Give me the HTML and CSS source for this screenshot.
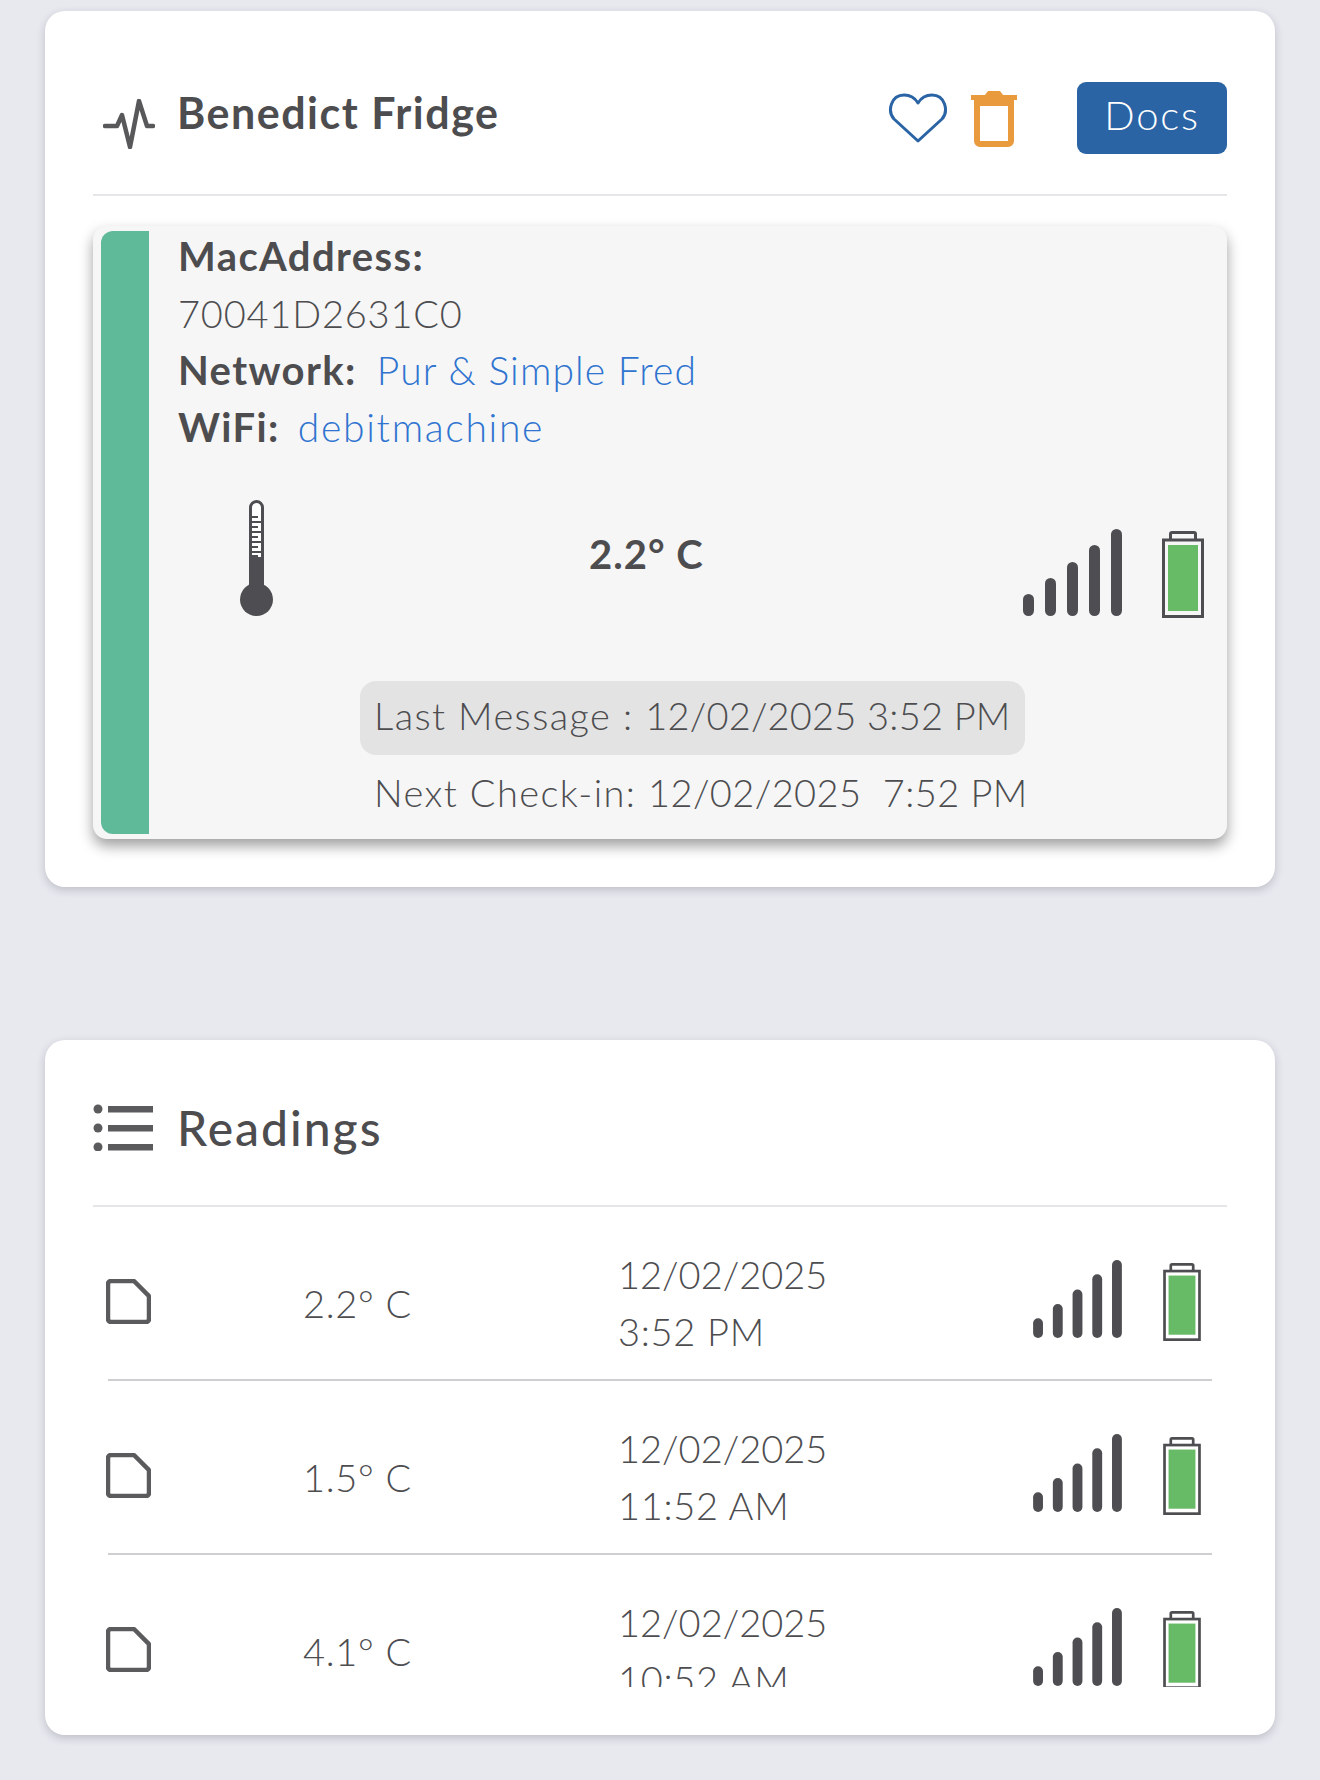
FILE: index.html
```html
<!DOCTYPE html>
<html lang="en">
<head>
<meta charset="utf-8">
<title>Benedict Fridge</title>
<link rel="stylesheet" href="styles.css">
</head>
<body>
<svg class="defs" width="0" height="0" aria-hidden="true">
  <symbol id="signal" viewBox="0 0 99 87">
    <rect x="0" y="65" width="11" height="22" rx="5.5"/>
    <rect x="22" y="49" width="11" height="38" rx="5.5"/>
    <rect x="44" y="33" width="11" height="54" rx="5.5"/>
    <rect x="66" y="16" width="11" height="71" rx="5.5"/>
    <rect x="88" y="0" width="11" height="87" rx="5.5"/>
  </symbol>
  <symbol id="battery" viewBox="0 0 42 87">
    <path class="bat-line" d="M8.5 9V3a1.5 1.5 0 0 1 1.5-1.5h22a1.5 1.5 0 0 1 1.5 1.5v6"/>
    <rect class="bat-line" x="1.5" y="9" width="39" height="76.500"/>
    <rect class="bat-fill" x="6" y="14" width="30" height="66"/>
  </symbol>
  <symbol id="doc" viewBox="0 0 45 45">
    <path d="M5 2h22a3 3 0 0 1 2 1l13 13a3 3 0 0 1 1 2v22a3 3 0 0 1-3 3H5a3 3 0 0 1-3-3V5a3 3 0 0 1 3-3z"/>
  </symbol>
</svg>

<main class="page">
  <section class="card device">
    <header class="head head-device">
      <div class="title-group">
        <svg class="pulse" viewBox="0 0 52 50" width="52" height="50" aria-hidden="true"><path d="M2 27h12l5-11 8 32 9-46 8 25h6"/></svg>
        <h1 class="title">Benedict Fridge</h1>
      </div>
      <div class="actions">
        <svg class="heart" viewBox="0 0 60 52" width="60" height="52" aria-hidden="true"><path d="M30 49 6 27C-1 19 3 3 16 3c6 0 11 3 14 8 3-5 8-8 14-8 13 0 17 16 10 24z"/></svg>
        <svg class="trash" viewBox="0 0 46 58" width="46" height="58" aria-hidden="true"><path class="trash-lid" d="M0 6h14l3-4h12l3 4h14v5H0z"/><path class="trash-body" d="M6 14h34v38a3 3 0 0 1-3 3H9a3 3 0 0 1-3-3z"/></svg>
        <a class="docs">Docs</a>
      </div>
    </header>

    <div class="status">
      <div class="status-bar"></div>
      <div class="status-body">
        <div class="line"><b>MacAddress:</b></div>
        <div class="line mono-value">70041D2631C0</div>
        <div class="line"><b>Network:</b><a class="link">Pur &amp; Simple Fred</a></div>
        <div class="line"><b>WiFi:</b><a class="link link-wide">debitmachine</a></div>

        <div class="sensor">
          <svg class="thermo" viewBox="0 0 33 116" width="33" height="116" aria-hidden="true">
            <path class="thermo-glass" d="M16.500 1.500a6 6 0 0 1 6 6v94h-12v-94a6 6 0 0 1 6-6z"/>
            <path class="thermo-ticks" d="M11 17h7M11 22h10M11 27h7M11 32h10M11 37h7M11 42h10M11 47h7M11 52h10M11 56h7"/>
            <rect class="thermo-fill" x="9" y="57" width="15" height="40"/>
            <circle class="thermo-fill" cx="16.500" cy="99.500" r="16.500"/>
          </svg>
          <div class="temp-big">2.2° C</div>
          <svg class="signal-lg" aria-hidden="true"><use href="#signal"/></svg>
          <svg class="battery-lg" aria-hidden="true"><use href="#battery"/></svg>
        </div>

        <div class="times">
          <div class="pill"><span class="time-label">Last Message : </span><span class="time-value">12/02/2025 3:52 PM</span></div>
          <div class="next"><span class="time-label">Next Check-in: </span><span class="time-value time-value-next">12/02/2025 &nbsp;7:52 PM</span></div>
        </div>
      </div>
    </div>
  </section>

  <section class="card readings">
    <header class="head head-readings">
      <svg class="list-icon" viewBox="0 0 60 47" width="60" height="47" aria-hidden="true">
        <circle cx="5" cy="5" r="4.500"/><circle cx="5" cy="24" r="4.500"/><circle cx="5" cy="43" r="4.500"/>
        <rect x="15" y="2" width="45" height="6.500"/><rect x="15" y="21" width="45" height="6.500"/><rect x="15" y="40" width="45" height="6.500"/>
      </svg>
      <h2 class="title title-regular">Readings</h2>
    </header>

    <div class="rows">
      <div class="row">
        <svg class="doc" aria-hidden="true"><use href="#doc"/></svg>
        <div class="row-temp">2.2° C</div>
        <div class="row-date">12/02/2025<br><span class="row-time">3:52 PM</span></div>
        <svg class="signal-sm" aria-hidden="true"><use href="#signal"/></svg>
        <svg class="battery-sm" aria-hidden="true"><use href="#battery"/></svg>
      </div>
      <div class="row">
        <svg class="doc" aria-hidden="true"><use href="#doc"/></svg>
        <div class="row-temp">1.5° C</div>
        <div class="row-date">12/02/2025<br><span class="row-time">11:52 AM</span></div>
        <svg class="signal-sm" aria-hidden="true"><use href="#signal"/></svg>
        <svg class="battery-sm" aria-hidden="true"><use href="#battery"/></svg>
      </div>
      <div class="row">
        <svg class="doc" aria-hidden="true"><use href="#doc"/></svg>
        <div class="row-temp">4.1° C</div>
        <div class="row-date">12/02/2025<br><span class="row-time">10:52 AM</span></div>
        <svg class="signal-sm" aria-hidden="true"><use href="#signal"/></svg>
        <svg class="battery-sm" aria-hidden="true"><use href="#battery"/></svg>
      </div>
    </div>
  </section>
</main>
</body>
</html>
```

FILE: styles.css
```css
* { box-sizing: border-box; }
html, body { margin: 0; padding: 0; }
body {
  width: 1320px;
  height: 1780px;
  overflow: hidden;
  background: #e8e9ef;
  color: #4d4d50;
  font-family: "Lato", "Liberation Sans", sans-serif;
  font-weight: 300;
  font-size: 38px;
}
.defs { position: absolute; }
.page { padding: 11px 45px 0; }

.card {
  background: #fff;
  border-radius: 20px;
  box-shadow: 0 3px 8px rgba(40, 40, 60, .22);
  padding: 0 48px;
}
.device { height: 876px; }
.readings { height: 695px; margin-top: 153px; }

.head { display: flex; align-items: center; border-bottom: 2px solid #e6e6e8; }
.head-device { height: 185px; justify-content: space-between; padding-top: 30px; }
.head-readings { height: 167px; padding-top: 10px; }

.title-group { display: flex; align-items: center; }
.title { margin: 0 0 10px; font-size: 43px; font-weight: 700; letter-spacing: 1.5px; color: #4d4d50; white-space: nowrap; }
.title-regular { font-weight: 500; font-size: 48px; letter-spacing: 2px; margin: 0 0 0 24px; }
.pulse { margin: 13px 22px 0 10px; fill: none; stroke: #58585b; stroke-width: 4.500; stroke-linejoin: round; stroke-linecap: round; }
.list-icon { fill: #5b5b5e; }

.actions { display: flex; align-items: center; }
.heart { fill: none; stroke: #2a64a5; stroke-width: 3; stroke-linejoin: round; margin-left: -1px; }
.trash { margin-left: 23px; }
.trash-lid { fill: #e89a3c; }
.trash-body { fill: none; stroke: #e89a3c; stroke-width: 6; }
.docs {
  display: flex;
  align-items: center;
  justify-content: center;
  width: 150px;
  height: 72px;
  margin: 1px 0 0 60px;
  padding-bottom: 7px;
  background: #2a64a5;
  border-radius: 9px;
  color: #fff;
  font-size: 40px;
  letter-spacing: 1.8px;
}

.status {
  display: flex;
  height: 613px;
  margin-top: 30px;
  padding: 5px 0 5px 8px;
  background: #f6f6f6;
  border-radius: 14px;
  box-shadow: 0 7px 14px rgba(0, 0, 0, .38);
}
.status-bar {
  width: 48px;
  flex: none;
  background: #5fba9a;
  border-radius: 12px 0 0 12px;
}
.status-body { flex: 1; padding-left: 29px; min-width: 0; margin-top: -3px; }
.line { height: 57px; line-height: 57px; white-space: nowrap; }
.line b { font-weight: 700; font-size: 40px; letter-spacing: 1.4px; }
.mono-value { letter-spacing: .8px; }
.link { color: #2f74d0; margin-left: 20px; font-size: 39px; letter-spacing: 1.1px; }
.link-wide { letter-spacing: 1.7px; margin-left: 18px; }

.sensor { display: flex; align-items: center; height: 116px; margin-top: 44px; padding-left: 62px; }
.temp-big { font-weight: 700; font-size: 40px; letter-spacing: 1px; margin-left: 316px; margin-bottom: 8px; width: 434px; white-space: nowrap; }
.signal-lg { width: 99px; height: 87px; fill: #4e4e52; margin-top: 29px; }
.battery-lg { width: 42px; height: 87px; margin-left: 40px; margin-top: 33px; }
.bat-line { fill: none; stroke: #4e4e52; stroke-width: 3; }
.bat-fill { fill: #68bb66; }

.thermo-glass { fill: #fff; stroke: #4e4e52; stroke-width: 3; }
.thermo-ticks { fill: none; stroke: #4e4e52; stroke-width: 2; }
.thermo-fill { fill: #4e4e52; }

.times { margin-top: 65px; padding-left: 182px; }
.time-label { letter-spacing: 1.4px; }
.time-value { letter-spacing: .2px; }
.time-value-next { letter-spacing: .4px; }
.pill {
  width: 665px;
  height: 74px;
  line-height: 68px;
  padding-left: 14px;
  background: #e3e3e3;
  border-radius: 16px;
  white-space: nowrap;
}
.next { padding-left: 14px; margin-top: 9px; line-height: 57px; white-space: nowrap; }

.rows { height: 480px; overflow: hidden; padding: 0 15px; }
.row {
  display: flex;
  align-items: center;
  height: 174px;
  padding: 40px 11px 20px 0;
  border-bottom: 2px solid #cfcfd1;
}
.doc { width: 45px; height: 45px; flex: none; margin-left: -2px; margin-bottom: 4px; fill: none; stroke: #5b5b5e; stroke-width: 4.500; }
.row-temp { width: 316px; margin-left: 152px; flex: none; letter-spacing: .7px; white-space: nowrap; }
.row-date { flex: 1; line-height: 57px; white-space: nowrap; letter-spacing: 0; margin-left: -1px; }
.row-time { letter-spacing: .7px; }
.signal-sm { width: 89px; height: 78px; flex: none; fill: #4e4e52; margin-bottom: 8px; margin-left: 1px; }
.battery-sm { width: 38px; height: 78px; flex: none; margin-left: 41px; margin-bottom: 2px; }
```
